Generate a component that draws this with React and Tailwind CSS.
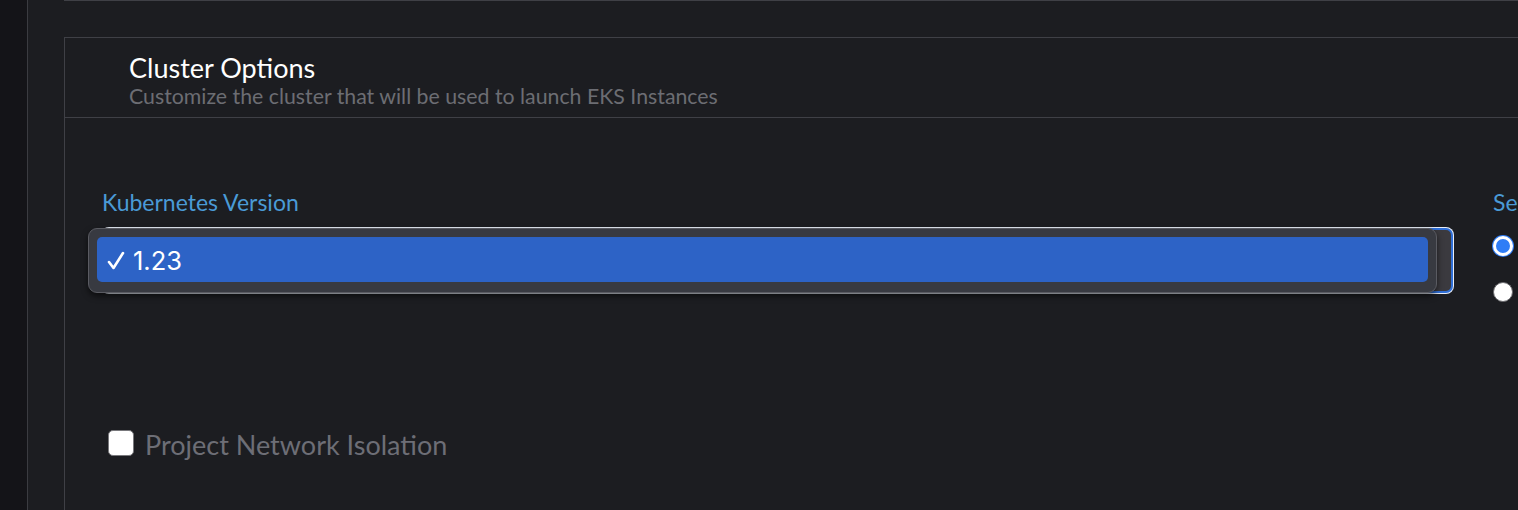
export default function App() {
  return (
    <div className="flex h-[510px] overflow-hidden bg-[#1c1d21] font-['Lato',sans-serif]">
      {/* Sidebar strip */}
      <div className="w-[28px] shrink-0 bg-[#141418] border-r border-[#3b3c41]" />

      <div className="flex-1 min-w-0 pl-[36px]">
        {/* Previous block edge */}
        <div className="border-t border-[#3f4046] mb-[36px]" />

        {/* Cluster options card */}
        <div className="w-[1600px] h-[480px] border-l border-t border-[#3f4046]">
          <div className="h-[80px] border-b border-[#3f4046] pl-[64px] pt-[14px]">
            <h3 className="text-[27px] leading-[32px] text-white">Cluster Options</h3>
            <p className="text-[21.3px] leading-[24px] text-[#6c6d73]">
              Customize the cluster that will be used to launch EKS Instances
            </p>
          </div>

          <div className="flex pl-[37px] pt-[69px]">
            {/* Kubernetes version */}
            <div className="w-[1351px]">
              <label className="block text-[23px] leading-[30px] text-[#4a9ad6] mb-[11px]">
                Kubernetes Version
              </label>
              <div className="relative h-[65px] rounded-[7px] border-2 border-[#2f6fd8] bg-[#3b3a3f] shadow-[0_0_0_1px_#e8eef8]">
                {/* Native select popup */}
                <div className="absolute -left-[16px] -top-[2px] right-[14px] -bottom-[2px] rounded-[9px] border border-[#5a5b62] bg-[#383a41] shadow-[0_3px_6px_rgba(0,0,0,0.6)] p-[8px]">
                  <div className="flex items-center h-[45px] rounded-[5px] bg-[#2d63c6] pl-[9px] pt-[3px] gap-[7px] text-white font-['Inter',sans-serif]">
                    <svg width="20" height="22" viewBox="0 0 20 22" fill="none" stroke="currentColor" strokeWidth="2.6" strokeLinecap="round" strokeLinejoin="round">
                      <path d="M3 12l4.5 6L17 3" />
                    </svg>
                    <span className="text-[25.5px]">1.23</span>
                  </div>
                </div>
              </div>
            </div>

            {/* Service role column */}
            <div className="ml-[40px]">
              <label className="block text-[23px] leading-[30px] text-[#4a9ad6] mb-[11px] whitespace-nowrap">
                Service Role
              </label>
              <div className="flex flex-col gap-[26px] pt-[8px]">
                <span className="block w-[20px] h-[20px] rounded-full bg-[#2f7df6] border-[3px] border-white ring-[1px] ring-[#2f7df6]" />
                <span className="block w-[20px] h-[20px] rounded-full bg-white border border-[#6a6a6e]" />
              </div>
            </div>
          </div>

          {/* Project network isolation */}
          <div className="flex items-center pl-[43px] pt-[127px] gap-[11px]">
            <span className="block w-[26px] h-[26px] -mt-[4px] rounded-[5px] bg-white border border-[#78787c]" />
            <span className="text-[27px] leading-[32px] text-[#6d6e76]">Project Network Isolation</span>
          </div>
        </div>
      </div>
    </div>
  );
}
